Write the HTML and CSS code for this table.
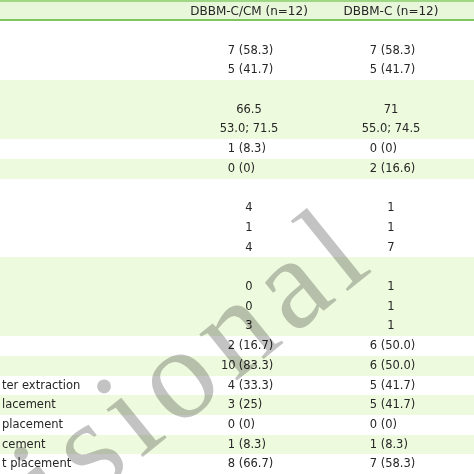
FILE: index.html
```html
<!DOCTYPE html>
<html>
<head>
<meta charset="utf-8">
<link rel="stylesheet" href="styles.css">
</head>
<body>
<div class="table">
  <div class="head">
    <div class="lbl"></div>
    <div class="c">DBBM-C/CM (n=12)</div>
    <div class="c">DBBM-C (n=12)</div>
  </div>

  <div class="row">
    <div class="lbl"></div><div class="c"></div><div class="c"></div>
    <div class="lbl"></div>
    <div class="c"><span class="pair"><span class="n">7</span><span class="p"> (58.3)</span></span></div>
    <div class="c"><span class="pair"><span class="n">7</span><span class="p"> (58.3)</span></span></div>
    <div class="lbl"></div>
    <div class="c"><span class="pair"><span class="n">5</span><span class="p"> (41.7)</span></span></div>
    <div class="c"><span class="pair"><span class="n">5</span><span class="p"> (41.7)</span></span></div>
  </div>

  <div class="row alt">
    <div class="lbl"></div><div class="c"></div><div class="c"></div>
    <div class="lbl"></div><div class="c">66.5</div><div class="c">71</div>
    <div class="lbl"></div><div class="c">53.0; 71.5</div><div class="c">55.0; 74.5</div>
  </div>

  <div class="row">
    <div class="lbl"></div>
    <div class="c"><span class="pair"><span class="n">1</span><span class="p"> (8.3)</span></span></div>
    <div class="c"><span class="pair"><span class="n">0</span><span class="p"> (0)</span></span></div>
  </div>

  <div class="row alt">
    <div class="lbl"></div>
    <div class="c"><span class="pair"><span class="n">0</span><span class="p"> (0)</span></span></div>
    <div class="c"><span class="pair"><span class="n">2</span><span class="p"> (16.6)</span></span></div>
  </div>

  <div class="row">
    <div class="lbl"></div><div class="c"></div><div class="c"></div>
    <div class="lbl"></div><div class="c">4</div><div class="c">1</div>
    <div class="lbl"></div><div class="c">1</div><div class="c">1</div>
    <div class="lbl"></div><div class="c">4</div><div class="c">7</div>
  </div>

  <div class="row alt">
    <div class="lbl"></div><div class="c"></div><div class="c"></div>
    <div class="lbl"></div><div class="c">0</div><div class="c">1</div>
    <div class="lbl"></div><div class="c">0</div><div class="c">1</div>
    <div class="lbl"></div><div class="c">3</div><div class="c">1</div>
  </div>

  <div class="row">
    <div class="lbl"></div>
    <div class="c"><span class="pair"><span class="n">2</span><span class="p"> (16.7)</span></span></div>
    <div class="c"><span class="pair"><span class="n">6</span><span class="p"> (50.0)</span></span></div>
  </div>

  <div class="row alt">
    <div class="lbl"></div>
    <div class="c"><span class="pair"><span class="n">10</span><span class="p"> (83.3)</span></span></div>
    <div class="c"><span class="pair"><span class="n">6</span><span class="p"> (50.0)</span></span></div>
  </div>

  <div class="row">
    <div class="lbl">ter extraction</div>
    <div class="c"><span class="pair"><span class="n">4</span><span class="p"> (33.3)</span></span></div>
    <div class="c"><span class="pair"><span class="n">5</span><span class="p"> (41.7)</span></span></div>
  </div>

  <div class="row alt">
    <div class="lbl">lacement</div>
    <div class="c"><span class="pair"><span class="n">3</span><span class="p"> (25)</span></span></div>
    <div class="c"><span class="pair"><span class="n">5</span><span class="p"> (41.7)</span></span></div>
  </div>

  <div class="row">
    <div class="lbl">placement</div>
    <div class="c"><span class="pair"><span class="n">0</span><span class="p"> (0)</span></span></div>
    <div class="c"><span class="pair"><span class="n">0</span><span class="p"> (0)</span></span></div>
  </div>

  <div class="row alt">
    <div class="lbl">cement</div>
    <div class="c"><span class="pair"><span class="n">1</span><span class="p"> (8.3)</span></span></div>
    <div class="c"><span class="pair"><span class="n">1</span><span class="p"> (8.3)</span></span></div>
  </div>

  <div class="row last">
    <div class="lbl">t placement</div>
    <div class="c"><span class="pair"><span class="n">8</span><span class="p"> (66.7)</span></span></div>
    <div class="c"><span class="pair"><span class="n">7</span><span class="p"> (58.3)</span></span></div>
  </div>
</div>
<div class="wm">Provisional</div>
</body>
</html>
```

FILE: styles.css
```css
html {
  overflow: hidden;
  background: #ffffff;
}
body {
  margin: 0;
  width: 474px;
  height: 474px;
  overflow: hidden;
  position: relative;
  font-family: "DejaVu Sans", sans-serif;
  font-size: 11.5px;
  color: #262626;
}
.table {
  width: 474px;
}
.head,
.row {
  display: grid;
  grid-template-columns: 178px 142px 142px 12px;
}
.head {
  border-top: 2px solid #9fd884;
  border-bottom: 2px solid #7ec45f;
  background: #e8f6da;
  height: 17px;
  line-height: 18px;
  font-size: 12px;
}
.row {
  line-height: 19.7px;
}
.row .lbl,
.head .lbl {
  grid-column: 1;
  padding-left: 2px;
  white-space: nowrap;
  overflow: hidden;
}
.c {
  text-align: center;
  white-space: nowrap;
  min-height: 19.7px;
}
.head .c {
  min-height: 0;
}
.alt {
  background: #eefadd;
}
.pair {
  display: inline-flex;
  width: 56px;
  text-align: left;
}
.pair .n {
  width: 14px;
  text-align: right;
}
.pair .p {
  white-space: pre;
}
.wm {
  position: absolute;
  left: -233px;
  top: 621px;
  font-family: "Liberation Serif", serif;
  font-size: 130px;
  letter-spacing: 10px;
  line-height: 1;
  white-space: nowrap;
  color: #c3c3c3;
  mix-blend-mode: multiply;
  transform: rotate(-39deg);
  transform-origin: 0 0;
  pointer-events: none;
}
```
